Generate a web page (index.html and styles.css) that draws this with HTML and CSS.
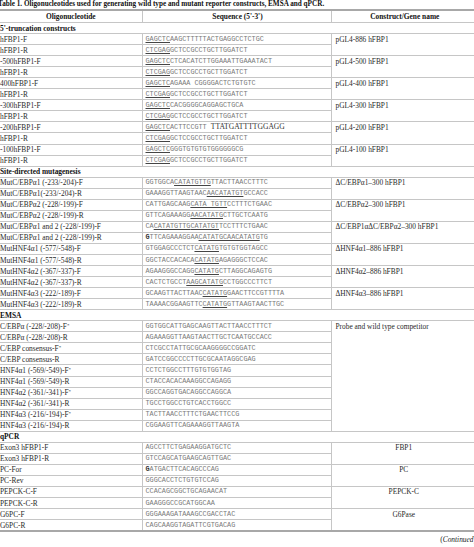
FILE: index.html
```html
<!DOCTYPE html>
<html>
<head>
<meta charset="utf-8">
<link rel="stylesheet" href="styles.css">
</head>
<body>
<div class="page">
<div class="title">Table 1.  Oligonucleotides used for generating wild type and mutant reporter constructs, EMSA and qPCR.</div>
<table class="oligo">
<colgroup><col class="c1"><col class="c2"><col class="c3"></colgroup>
<thead>
<tr><th>Oligonucleotide</th><th>Sequence (5'-3')</th><th>Construct/Gene name</th></tr>
</thead>
<tbody>
<tr class="section"><td colspan="3">5'-truncation constructs</td></tr>
<tr><td>hFBP1-F</td><td class="seq"><u>GAGCTC</u>AAGCTTTTTACTGAGGCCTCTGC</td><td class="gene" rowspan="2">pGL4-886 hFBP1</td></tr>
<tr><td>hFBP1-R</td><td class="seq"><u>CTCGAG</u>GCTCCGCCTGCTTGGATCT</td></tr>
<tr><td>-500hFBP1-F</td><td class="seq"><u>GAGCTC</u>CTCACATCTTGGAAATTGAAATACT</td><td class="gene" rowspan="2">pGL4-500 hFBP1</td></tr>
<tr><td>hFBP1-R</td><td class="seq"><u>CTCGAG</u>GCTCCGCCTGCTTGGATCT</td></tr>
<tr><td>400hFBP1-F</td><td class="seq"><u>GAGCTC</u>AGAAA CGGGGACTCTGTGTC</td><td class="gene" rowspan="2">pGL4-400 hFBP1</td></tr>
<tr><td>hFBP1-R</td><td class="seq"><u>CTCGAG</u>GCTCCGCCTGCTTGGATCT</td></tr>
<tr><td>-300hFBP1-F</td><td class="seq"><u>GAGCTC</u>CACGGGGCAGGAGCTGCA</td><td class="gene" rowspan="2">pGL4-300 hFBP1</td></tr>
<tr><td>hFBP1-R</td><td class="seq"><u>CTCGAG</u>GCTCCGCCTGCTTGGATCT</td></tr>
<tr><td>-200hFBP1-F</td><td class="seq"><u>GAGCTC</u>ACTTCCGTT <span class="alt">TTATGATTTTGGAGG</span></td><td class="gene" rowspan="2">pGL4-200 hFBP1</td></tr>
<tr><td>hFBP1-R</td><td class="seq"><u>CTCGAG</u>GCTCCGCCTGCTTGGATCT</td></tr>
<tr><td>-100hFBP1-F</td><td class="seq"><u>GAGCTC</u>GGGTGTGTGTGGGGGGCG</td><td class="gene" rowspan="2">pGL4-100 hFBP1</td></tr>
<tr><td>hFBP1-R</td><td class="seq"><u>CTCGAG</u>GCTCCGCCTGCTTGGATCT</td></tr>
<tr class="section"><td colspan="3">Site-directed mutagenesis</td></tr>
<tr><td>MutC/EBPα1 (-233/-204)-F</td><td class="seq">GGTGGCA<u>CATATGTTG</u>TTACTTAACCTTTC</td><td class="gene" rowspan="2">ΔC/EBPα1–300 hFBP1</td></tr>
<tr><td>MutC/EBPα1(-233/-204)-R</td><td class="seq">GAAAGGTTAAGTAAC<u>AACATATGT</u>GCCACC</td></tr>
<tr><td>MutC/EBPα2 (-228/-199)-F</td><td class="seq">CATTGAGCAAG<u>CATA TGTT</u>CCTTTCTGAAC</td><td class="gene" rowspan="2">ΔC/EBPα2–300 hFBP1</td></tr>
<tr><td>MutC/EBPα2 (-228/-199)-R</td><td class="seq">GTTCAGAAAGG<u>AACATATG</u>CTTGCTCAATG</td></tr>
<tr><td>MutC/EBPα1 and 2 (-228/-199)-F</td><td class="seq">CA<u>CATATGTTG</u><u>CATATGT</u>TCCTTTCTGAAC</td><td class="gene" rowspan="2">ΔC/EBP1αΔC/EBPα2–300 hFBP1</td></tr>
<tr><td>MutC/EBPα1 and 2 (-228/-199)-R</td><td class="seq"><b>G</b>TTCAGAAAGGAA<u>CATATGCAACATATG</u>TG</td></tr>
<tr><td>MutHNF4α1 (-577/-548)-F</td><td class="seq">GTGGAGCCCTCT<u>CATATG</u>TGTGTGGTAGCC</td><td class="gene" rowspan="2">ΔHNF4α1–886 hFBP1</td></tr>
<tr><td>MutHNF4α1 (-577/-548)-R</td><td class="seq">GGCTACCACACA<u>CATATG</u>AGAGGGCTCCAC</td></tr>
<tr><td>MutHNF4α2 (-367/-337)-F</td><td class="seq">AGAAGGGCCAGG<u>CATATG</u>CTTAGGCAGAGTG</td><td class="gene" rowspan="2">ΔHNF4α2–886 hFBP1</td></tr>
<tr><td>MutHNF4α2 (-367/-337)-R</td><td class="seq">CACTCTGCCT<u>AAGCATATG</u>CCTGGCCCTTCT</td></tr>
<tr><td>MutHNF4α3 (-222/-189)-F</td><td class="seq">GCAAGTTACTTAAC<u>CATATG</u>GAACTTCCGTTTTA</td><td class="gene" rowspan="2">ΔHNF4α3–886 hFBP1</td></tr>
<tr><td>MutHNF4α3 (-222/-189)-R</td><td class="seq">TAAAACGGAAGTTC<u>CATATG</u>GTTAAGTAACTTGC</td></tr>
<tr class="section"><td colspan="3">EMSA</td></tr>
<tr><td>C/EBPα (-228/-208)-F<sup>*</sup></td><td class="seq">GGTGGCATTGAGCAAGTTACTTAACCTTTCT</td><td class="gene" rowspan="10">Probe and wild type competitor</td></tr>
<tr><td>C/EBPα (-228/-208)-R</td><td class="seq">AGAAAGGTTAAGTAACTTGCTCAATGCCACC</td></tr>
<tr><td>C/EBP consensus-F<sup>*</sup></td><td class="seq">CTCGCCTATTGCGCAAGGGGCCGGATC</td></tr>
<tr><td>C/EBP consensus-R</td><td class="seq">GATCCGGCCCCTTGCGCAATAGGCGAG</td></tr>
<tr><td>HNF4α1 (-569/-549)-F<sup>*</sup></td><td class="seq">CCTCTGGCCTTTGTGTGGTAG</td></tr>
<tr><td>HNF4α1 (-569/-549)-R</td><td class="seq">CTACCACACAAAGGCCAGAGG</td></tr>
<tr><td>HNF4α2 (-361/-341)-F<sup>*</sup></td><td class="seq">GGCCAGGTGACAGGCCAGGCA</td></tr>
<tr><td>HNF4α2 (-361/-341)-R</td><td class="seq">TGCCTGGCCTGTCACCTGGCC</td></tr>
<tr><td>HNF4α3 (-216/-194)-F<sup>*</sup></td><td class="seq">TACTTAACCTTTCTGAACTTCCG</td></tr>
<tr><td>HNF4α3 (-216/-194)-R</td><td class="seq">CGGAAGTTCAGAAAGGTTAAGTA</td></tr>
<tr class="section"><td colspan="3">qPCR</td></tr>
<tr><td>Exon3 hFBP1-F</td><td class="seq">AGCCTTCTGAGAAGGATGCTC</td><td class="gene center" rowspan="2">FBP1</td></tr>
<tr><td>Exon3 hFBP1-R</td><td class="seq">GTCCAGCATGAAGCAGTTGAC</td></tr>
<tr><td>PC-For</td><td class="seq"><b>G</b>ATGACTTCACAGCCCAG</td><td class="gene center" rowspan="2">PC</td></tr>
<tr><td>PC-Rev</td><td class="seq">GGGCACCTCTGTGTCCAG</td></tr>
<tr><td>PEPCK-C-F</td><td class="seq">CCACAGCGGCTGCAGAACAT</td><td class="gene center" rowspan="2">PEPCK-C</td></tr>
<tr><td>PEPCK-C-R</td><td class="seq">GAAGGGCCGCATGGCAA</td></tr>
<tr><td>G6PC-F</td><td class="seq">GGGAAAGATAAAGCCGACCTAC</td><td class="gene center last" rowspan="2">G6Pase</td></tr>
<tr class="last"><td>G6PC-R</td><td class="seq">CAGCAAGGTAGATTCGTGACAG</td></tr>
</tbody>
</table>
<div class="continued">(<i>Continued</i>)</div>
</div>
</body>
</html>
```

FILE: styles.css
```css
html, body {
  margin: 0;
  padding: 0;
  background: #ffffff;
  overflow: hidden;
}
body {
  font-family: "Liberation Serif", "Times New Roman", serif;
  color: #2a2a2a;
}
.page {
  width: 478px;
  margin-left: -2px;
}
.title {
  font-weight: bold;
  font-size: 7.2px;
  line-height: 9px;
  height: 9px;
  white-space: nowrap;
  color: #111;
}
.oligo {
  border-collapse: collapse;
  table-layout: fixed;
  width: 478px;
}
.c1 { width: 144px; }
.c2 { width: 189px; }
.c3 { width: 145px; }
.oligo th,
.oligo td {
  border: 1px solid #c6c6c6;
  padding: 0 0 0 2px;
  height: 10.05px;
  font-size: 7.4px;
  line-height: 9px;
  white-space: nowrap;
  overflow: hidden;
  vertical-align: middle;
  text-align: left;
}
.oligo tr > :first-child { border-left: none; }
.oligo tr > :last-child { border-right: none; }
.oligo th {
  font-weight: bold;
  text-align: center;
  height: 11px;
  border-top: 2px solid #a8a8a8;
  color: #111;
}
.oligo .section td {
  font-weight: bold;
  color: #111;
  padding-left: 2px;
}
.oligo td.seq {
  font-family: "Liberation Mono", "DejaVu Sans Mono", monospace;
  font-size: 6.8px;
  color: #7a7a7a;
  padding-left: 3px;
}
.seq u {
  text-decoration-color: #444;
  text-underline-offset: 1px;
}
.seq b {
  color: #333;
}
.seq .alt {
  font-family: "Liberation Serif", serif;
  font-size: 7.6px;
  color: #333;
}
.oligo td.gene {
  vertical-align: top;
  padding-left: 4px;
  padding-top: 0.5px;
}
.oligo td.center {
  text-align: center;
  padding-left: 0;
}
.oligo sup {
  font-size: 5px;
  line-height: 0;
  vertical-align: 2px;
}
.oligo tr.last td,
.oligo td.last {
  border-bottom: 2px solid #a8a8a8;
}
.continued {
  text-align: right;
  font-size: 7.4px;
  line-height: 9px;
  margin-top: 3px;
  color: #222;
}
```
